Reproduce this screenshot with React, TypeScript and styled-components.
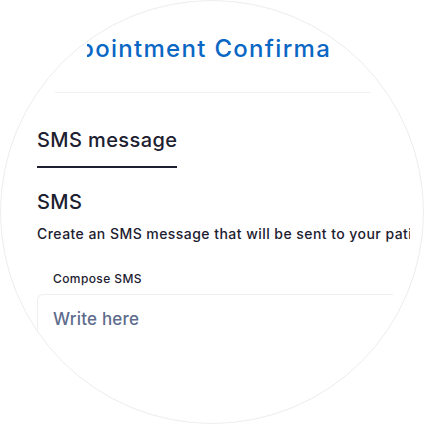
import styled, { createGlobalStyle } from "styled-components";

const GlobalStyle = createGlobalStyle`
  html, body {
    margin: 0;
    padding: 0;
    background: #ffffff;
  }
  body {
    font-family: "Inter", "Noto Sans", sans-serif;
    color: #1d2030;
  }
`;

export default function App() {
  return (
    <>
      <GlobalStyle />
      <Circle>
        <Header>
          <TitleClip>
            <Title>Appointment Confirmation</Title>
          </TitleClip>
          <Divider />
        </Header>
        <Body>
          <Tab>SMS message</Tab>
          <SectionTitle>SMS</SectionTitle>
          <Description>
            Create an SMS message that will be sent to your patients before
            their appointment
          </Description>
          <Field>
            <Label>Compose SMS</Label>
            <InputBox>
              <Placeholder>Write here</Placeholder>
            </InputBox>
          </Field>
        </Body>
      </Circle>
    </>
  );
}

const Circle = styled.div`
  box-sizing: border-box;
  width: 424px;
  height: 424px;
  border-radius: 50%;
  border: 1px solid #ededed;
  background: #ffffff;
  overflow: hidden;
  padding-top: 30px;
`;

const Header = styled.div`
  display: flex;
  flex-direction: column;
  align-items: center;
`;

const TitleClip = styled.div`
  width: 243px;
  margin-left: -8px;
  display: flex;
  justify-content: center;
  overflow: hidden;
`;

const Title = styled.h1`
  margin: 0;
  padding-left: 8px;
  white-space: nowrap;
  font-size: 24px;
  line-height: 36px;
  font-weight: 500;
  letter-spacing: 1.3px;
  color: #0a67c4;
`;

const Divider = styled.div`
  width: 315px;
  height: 1px;
  margin-top: 25px;
  background: #f0f0f0;
`;

const Body = styled.div`
  padding: 0 0 0 36px;
  width: 373px;
  display: flex;
  flex-direction: column;
  align-items: flex-start;
  letter-spacing: 0.4px;
`;

const Tab = styled.div`
  margin-top: 33px;
  font-size: 20px;
  line-height: 28px;
  font-weight: 500;
  padding-bottom: 12px;
  border-bottom: 2px solid #1d2030;
`;

const SectionTitle = styled.h2`
  margin: 20px 0 0;
  font-size: 20px;
  line-height: 28px;
  font-weight: 500;
`;

const Description = styled.p`
  margin: 8px 0 0;
  width: 373px;
  overflow: hidden;
  white-space: nowrap;
  font-size: 14px;
  line-height: 20px;
  font-weight: 500;
  letter-spacing: 0.45px;
`;

const Field = styled.div`
  margin-top: 26px;
  width: 356px;
  display: flex;
  flex-direction: column;
`;

const Label = styled.label`
  padding-left: 16px;
  font-size: 12px;
  line-height: 18px;
  font-weight: 500;
  color: #1d2030;
`;

const InputBox = styled.div`
  margin-top: 6px;
  height: 90px;
  border: 1px solid #efefef;
  border-right: none;
  border-bottom: none;
  border-radius: 6px 0 0 0;
  padding: 12px 15px;
`;

const Placeholder = styled.span`
  font-size: 17px;
  line-height: 24px;
  font-weight: 500;
  letter-spacing: 0.2px;
  color: #5e6c8c;
`;
